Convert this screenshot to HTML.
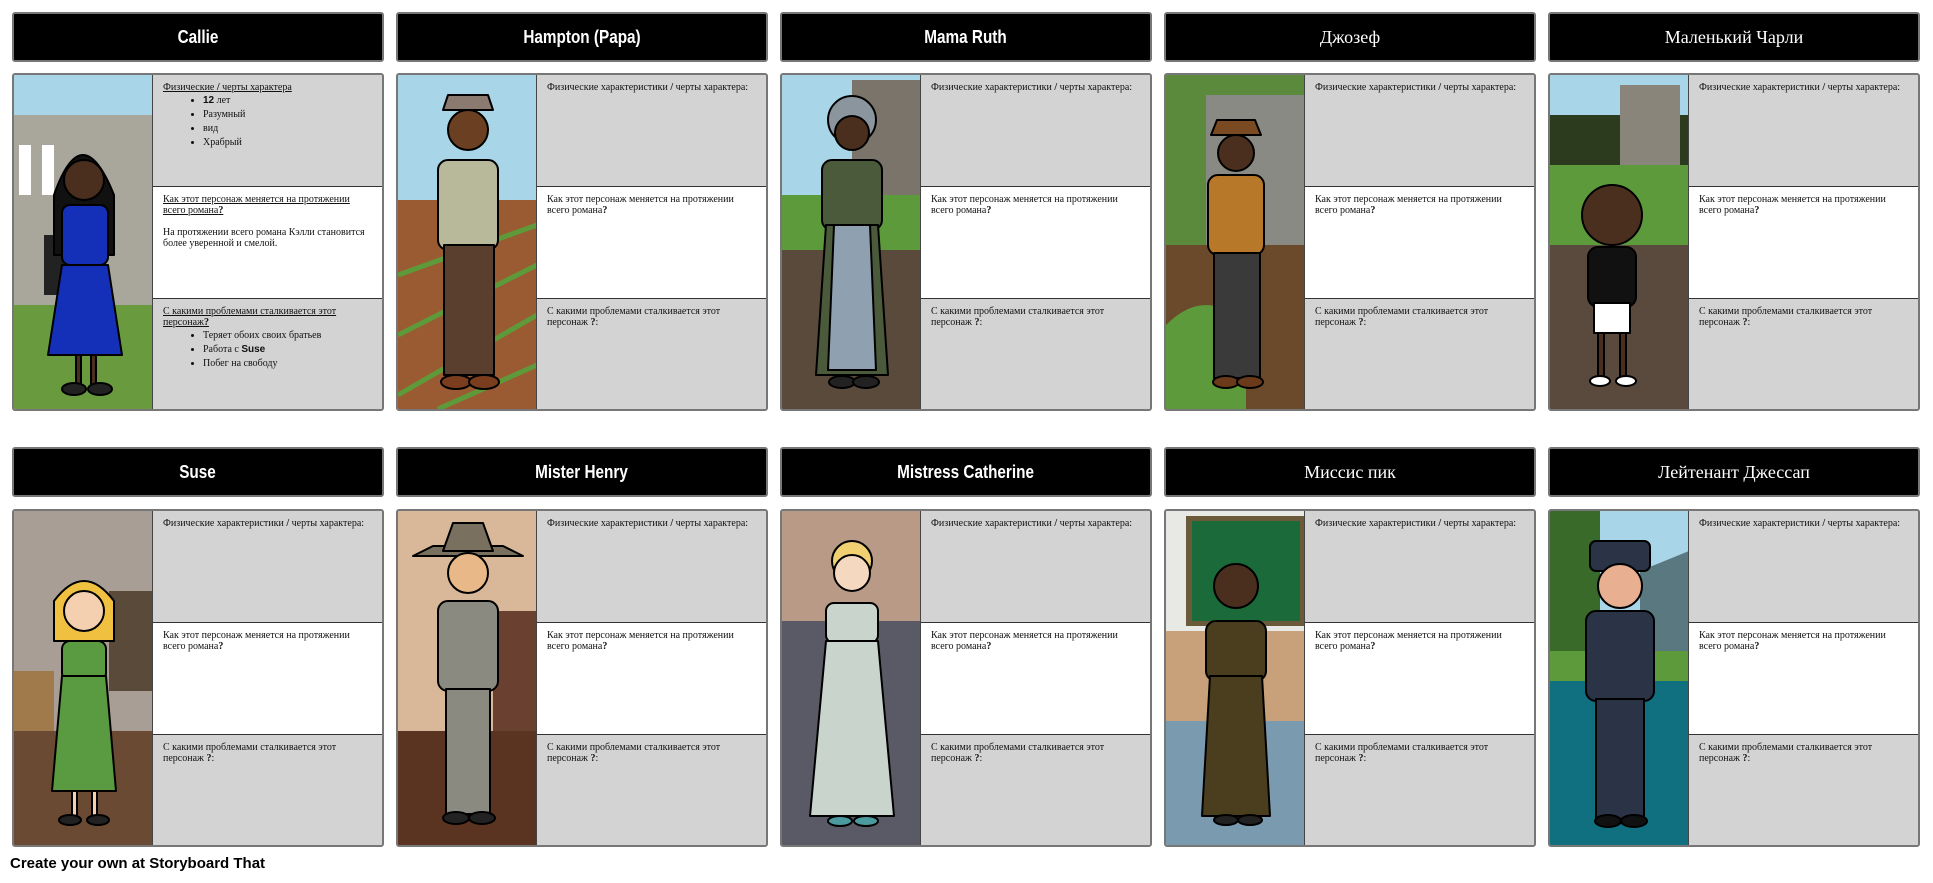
<!DOCTYPE html>
<html><head><meta charset="utf-8"><style>
*{margin:0;padding:0;box-sizing:border-box}
body{width:1933px;height:883px;background:#fff;position:relative;overflow:hidden;font-family:"Liberation Serif","Noto Serif CJK SC",serif}
.h{position:absolute;width:372px;height:50px;background:#000;border:2px solid #777;border-radius:3px;color:#fff;display:flex;align-items:center;justify-content:center;font-size:18px}
.h.b{font-family:"Liberation Sans",sans-serif;font-weight:bold;font-size:18px}
.h.b span{display:inline-block;transform:scaleX(0.85)}
.p{position:absolute;width:372px;height:338px;border:2px solid #777;border-radius:3px;background:#d3d3d3;overflow:hidden}
.img{position:absolute;left:0;top:0;width:139px;height:334px;border-right:1px solid #444;overflow:hidden}
.c{position:absolute;left:139px;width:229px;height:112px;padding:7px 8px 7px 10px;font-size:10px;line-height:11px;color:#111}
.c1{top:0;background:#d3d3d3;border-bottom:1px solid #333}
.c2{top:112px;background:#fff;border-bottom:1px solid #333}
.c3{top:224px;background:#d3d3d3;height:110px}
.c ul{margin:2px 0 0 40px}
.c li{margin-bottom:3px}
u{text-decoration:underline}
.f{position:absolute;bottom:0;left:0;width:139px;height:334px}
.f g{stroke-linejoin:round}
.foot{position:absolute;left:10px;top:855px;font-family:"Liberation Sans",sans-serif;font-weight:bold;font-size:15px}
</style></head><body>

<div class="h b" style="left:12px;top:12px"><span>Callie</span></div>
<div class="h b" style="left:396px;top:12px"><span>Hampton (Papa)</span></div>
<div class="h b" style="left:780px;top:12px"><span>Mama Ruth</span></div>
<div class="h" style="left:1164px;top:12px">Джозеф</div>
<div class="h" style="left:1548px;top:12px">Маленький Чарли</div>
<div class="h b" style="left:12px;top:447px"><span>Suse</span></div>
<div class="h b" style="left:396px;top:447px"><span>Mister Henry</span></div>
<div class="h b" style="left:780px;top:447px"><span>Mistress Catherine</span></div>
<div class="h" style="left:1164px;top:447px">Миссис пик</div>
<div class="h" style="left:1548px;top:447px">Лейтенант Джессап</div>

<div class="p" style="left:12px;top:73px">
<div class="img"><svg class="f" viewBox="0 0 139 334"><rect width="139" height="334" fill="#a8d6e8"/><rect x="0" y="40" width="139" height="200" fill="#a9a79b"/><rect x="0" y="230" width="139" height="104" fill="#6a9a3e"/><rect x="5" y="70" width="12" height="50" fill="#fff"/><rect x="28" y="70" width="12" height="50" fill="#fff"/><rect x="30" y="160" width="20" height="60" fill="#222"/>
<g stroke="#000" stroke-width="2"><path d="M40 120 q28-80 60 0 v60 h-60z" fill="#111"/><circle cx="70" cy="105" r="20" fill="#4a2f1e"/><rect x="48" y="130" width="46" height="60" rx="8" fill="#1530b8"/><path d="M48 190 h46 l14 90 h-74z" fill="#1530b8"/><rect x="62" y="280" width="5" height="30" fill="#4a2f1e"/><rect x="77" y="280" width="5" height="30" fill="#4a2f1e"/><ellipse cx="60" cy="314" rx="12" ry="6" fill="#222"/><ellipse cx="86" cy="314" rx="12" ry="6" fill="#222"/></g></svg></div>
<div class="c c1"><u>Физические <b>/</b> черты характера</u><ul><li><b style="font-family:'Liberation Sans'">12</b> лет</li><li>Разумный</li><li>вид</li><li>Храбрый</li></ul></div>
<div class="c c2"><u>Как этот персонаж меняется на протяжении всего романа<b>?</b></u><br><br>На протяжении всего романа Кэлли становится более уверенной и смелой.</div>
<div class="c c3"><u>С какими проблемами сталкивается этот персонаж<b>?</b></u><ul><li>Теряет обоих своих братьев</li><li>Работа с <b style="font-family:'Liberation Sans'">Suse</b></li><li>Побег на свободу</li></ul></div>
</div>

<div class="p" style="left:396px;top:73px">
<div class="img"><svg class="f" viewBox="0 0 139 334"><rect width="139" height="334" fill="#a8d6e8"/><rect y="125" width="139" height="209" fill="#9a5a32"/><g stroke="#5e9a3a" stroke-width="5"><path d="M0 200 L139 150"/><path d="M0 260 L139 190"/><path d="M0 320 L139 240"/><path d="M40 334 L139 290"/></g>
<g stroke="#000" stroke-width="2"><path d="M45 35 h50 l-5-15 h-40z" fill="#8a7a70"/><circle cx="70" cy="55" r="20" fill="#6b3f22"/><rect x="40" y="85" width="60" height="90" rx="10" fill="#b8b89a"/><rect x="46" y="170" width="50" height="130" fill="#5a3e2e"/><ellipse cx="58" cy="307" rx="15" ry="7" fill="#7a3e1e"/><ellipse cx="86" cy="307" rx="15" ry="7" fill="#7a3e1e"/></g></svg></div>
<div class="c c1">Физические характеристики <b>/</b> черты характера:</div>
<div class="c c2">Как этот персонаж меняется на протяжении всего романа<b>?</b></div>
<div class="c c3">С какими проблемами сталкивается этот персонаж <b>?</b>:</div>
</div>

<div class="p" style="left:780px;top:73px">
<div class="img"><svg class="f" viewBox="0 0 139 334"><rect width="139" height="334" fill="#a8d6e8"/><rect x="70" y="5" width="69" height="140" fill="#7a746a"/><rect y="120" width="139" height="60" fill="#5d9a3c"/><rect y="175" width="139" height="159" fill="#5a4a3c"/>
<g stroke="#000" stroke-width="2"><circle cx="70" cy="45" r="24" fill="#8a959e"/><circle cx="70" cy="58" r="17" fill="#4a2f1e"/><rect x="40" y="85" width="60" height="70" rx="10" fill="#4a5a3a"/><path d="M44 150 h52 l10 150 h-72z" fill="#4a5a3a"/><path d="M52 150 h36 l6 145 h-48z" fill="#8fa0b0"/><ellipse cx="60" cy="307" rx="13" ry="6" fill="#222"/><ellipse cx="84" cy="307" rx="13" ry="6" fill="#222"/></g></svg></div>
<div class="c c1">Физические характеристики <b>/</b> черты характера:</div>
<div class="c c2">Как этот персонаж меняется на протяжении всего романа<b>?</b></div>
<div class="c c3">С какими проблемами сталкивается этот персонаж <b>?</b>:</div>
</div>

<div class="p" style="left:1164px;top:73px">
<div class="img"><svg class="f" viewBox="0 0 139 334"><rect width="139" height="334" fill="#5c8a3c"/><rect x="40" y="20" width="99" height="150" fill="#8a8a84"/><rect y="170" width="139" height="164" fill="#6a4a2a"/><path d="M0 250 q40-40 80 0 v84 h-80z" fill="#5d9a3c"/>
<g stroke="#000" stroke-width="2"><path d="M45 60 h50 l-6-15 h-38z" fill="#7a4a22"/><circle cx="70" cy="78" r="18" fill="#4a2f1e"/><rect x="42" y="100" width="56" height="80" rx="10" fill="#b8782a"/><rect x="48" y="178" width="46" height="125" fill="#3a3a3a"/><ellipse cx="60" cy="307" rx="13" ry="6" fill="#6a3a1a"/><ellipse cx="84" cy="307" rx="13" ry="6" fill="#6a3a1a"/></g></svg></div>
<div class="c c1">Физические характеристики <b>/</b> черты характера:</div>
<div class="c c2">Как этот персонаж меняется на протяжении всего романа<b>?</b></div>
<div class="c c3">С какими проблемами сталкивается этот персонаж <b>?</b>:</div>
</div>

<div class="p" style="left:1548px;top:73px">
<div class="img"><svg class="f" viewBox="0 0 139 334"><rect width="139" height="334" fill="#a8d6e8"/><rect y="40" width="139" height="60" fill="#2c3a1e"/><rect x="70" y="10" width="60" height="230" fill="#8a857a"/><rect y="90" width="139" height="80" fill="#5d9a3c"/><rect y="170" width="139" height="164" fill="#5a4a3e"/>
<g stroke="#000" stroke-width="2"><circle cx="62" cy="140" r="30" fill="#4a2f1e"/><rect x="38" y="172" width="48" height="60" rx="10" fill="#111"/><rect x="44" y="228" width="36" height="30" fill="#fff"/><rect x="48" y="258" width="6" height="45" fill="#4a2f1e"/><rect x="70" y="258" width="6" height="45" fill="#4a2f1e"/><ellipse cx="50" cy="306" rx="10" ry="5" fill="#fff"/><ellipse cx="76" cy="306" rx="10" ry="5" fill="#fff"/></g></svg></div>
<div class="c c1">Физические характеристики <b>/</b> черты характера:</div>
<div class="c c2">Как этот персонаж меняется на протяжении всего романа<b>?</b></div>
<div class="c c3">С какими проблемами сталкивается этот персонаж <b>?</b>:</div>
</div>

<div class="p" style="left:12px;top:509px">
<div class="img"><svg class="f" viewBox="0 0 139 334"><rect width="139" height="334" fill="#a89e96"/><rect x="95" y="80" width="44" height="100" fill="#5a4a3a"/><rect y="220" width="139" height="114" fill="#6a4a32"/><rect x="0" y="160" width="40" height="60" fill="#a07a4a"/>
<g stroke="#000" stroke-width="2"><path d="M40 90 q30-40 60 0 v40 h-60z" fill="#f0c040"/><circle cx="70" cy="100" r="20" fill="#f5d0b0"/><rect x="48" y="130" width="44" height="40" rx="8" fill="#5a9a40"/><path d="M48 165 h44 l10 115 h-64z" fill="#5a9a40"/><rect x="58" y="280" width="5" height="25" fill="#f5d0b0"/><rect x="78" y="280" width="5" height="25" fill="#f5d0b0"/><ellipse cx="56" cy="309" rx="11" ry="5" fill="#222"/><ellipse cx="84" cy="309" rx="11" ry="5" fill="#222"/></g></svg></div>
<div class="c c1">Физические характеристики <b>/</b> черты характера:</div>
<div class="c c2">Как этот персонаж меняется на протяжении всего романа<b>?</b></div>
<div class="c c3">С какими проблемами сталкивается этот персонаж <b>?</b>:</div>
</div>

<div class="p" style="left:396px;top:509px">
<div class="img"><svg class="f" viewBox="0 0 139 334"><rect width="139" height="334" fill="#d9b89a"/><rect x="95" y="100" width="44" height="120" fill="#6a4030"/><rect y="220" width="139" height="114" fill="#5a3420"/>
<g stroke="#000" stroke-width="2"><path d="M15 45 h110 l-20 -10 h-70z" fill="#7a7060"/><path d="M45 40 l10-28 h30 l10 28z" fill="#7a7060"/><circle cx="70" cy="62" r="20" fill="#e8b888"/><rect x="40" y="90" width="60" height="90" rx="10" fill="#8a8a80"/><rect x="48" y="178" width="44" height="125" fill="#8a8a80"/><ellipse cx="58" cy="307" rx="13" ry="6" fill="#222"/><ellipse cx="84" cy="307" rx="13" ry="6" fill="#222"/></g></svg></div>
<div class="c c1">Физические характеристики <b>/</b> черты характера:</div>
<div class="c c2">Как этот персонаж меняется на протяжении всего романа<b>?</b></div>
<div class="c c3">С какими проблемами сталкивается этот персонаж <b>?</b>:</div>
</div>

<div class="p" style="left:780px;top:509px">
<div class="img"><svg class="f" viewBox="0 0 139 334"><rect width="139" height="334" fill="#b89a86"/><rect x="0" y="110" width="139" height="224" fill="#5a5a66"/>
<g stroke="#000" stroke-width="2"><circle cx="70" cy="50" r="20" fill="#f0d070"/><circle cx="70" cy="62" r="18" fill="#f5d8c0"/><rect x="44" y="92" width="52" height="40" rx="8" fill="#c8d4cc"/><path d="M44 130 h52 l16 175 h-84z" fill="#c8d4cc"/><ellipse cx="58" cy="310" rx="12" ry="5" fill="#4a9aa0"/><ellipse cx="84" cy="310" rx="12" ry="5" fill="#4a9aa0"/></g></svg></div>
<div class="c c1">Физические характеристики <b>/</b> черты характера:</div>
<div class="c c2">Как этот персонаж меняется на протяжении всего романа<b>?</b></div>
<div class="c c3">С какими проблемами сталкивается этот персонаж <b>?</b>:</div>
</div>

<div class="p" style="left:1164px;top:509px">
<div class="img"><svg class="f" viewBox="0 0 139 334"><rect width="139" height="334" fill="#e8e8e4"/><rect x="20" y="5" width="119" height="110" fill="#6a5a3a"/><rect x="26" y="10" width="108" height="100" fill="#1a6a3a"/><rect y="120" width="139" height="90" fill="#c8a07a"/><rect y="210" width="139" height="124" fill="#7a9ab0"/>
<g stroke="#000" stroke-width="2"><circle cx="70" cy="75" r="22" fill="#4a2f1e"/><rect x="40" y="110" width="60" height="60" rx="10" fill="#4a3e1e"/><path d="M44 165 h52 l8 140 h-68z" fill="#4a3e1e"/><ellipse cx="60" cy="309" rx="12" ry="5" fill="#222"/><ellipse cx="84" cy="309" rx="12" ry="5" fill="#222"/></g></svg></div>
<div class="c c1">Физические характеристики <b>/</b> черты характера:</div>
<div class="c c2">Как этот персонаж меняется на протяжении всего романа<b>?</b></div>
<div class="c c3">С какими проблемами сталкивается этот персонаж <b>?</b>:</div>
</div>

<div class="p" style="left:1548px;top:509px">
<div class="img"><svg class="f" viewBox="0 0 139 334"><rect width="139" height="334" fill="#a8d6e8"/><rect x="0" y="0" width="50" height="220" fill="#3a6a2a"/><path d="M90 60 l49-20 v100 h-49z" fill="#5a7880"/><rect y="140" width="139" height="60" fill="#5d9a3c"/><rect y="170" width="139" height="164" fill="#107080"/>
<g stroke="#000" stroke-width="2"><rect x="40" y="30" width="60" height="30" rx="6" fill="#2a3446"/><circle cx="70" cy="75" r="22" fill="#e8b090"/><rect x="36" y="100" width="68" height="90" rx="10" fill="#2a3446"/><rect x="46" y="188" width="48" height="120" fill="#2a3446"/><ellipse cx="58" cy="310" rx="13" ry="6" fill="#111"/><ellipse cx="84" cy="310" rx="13" ry="6" fill="#111"/></g></svg></div>
<div class="c c1">Физические характеристики <b>/</b> черты характера:</div>
<div class="c c2">Как этот персонаж меняется на протяжении всего романа<b>?</b></div>
<div class="c c3">С какими проблемами сталкивается этот персонаж <b>?</b>:</div>
</div>

<div class="foot">Create your own at Storyboard That</div>
</body></html>
